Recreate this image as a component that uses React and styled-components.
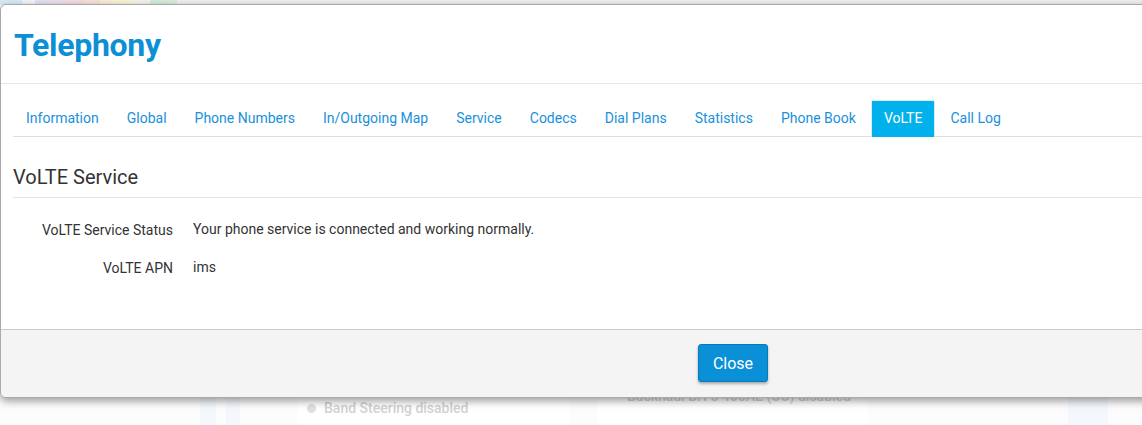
import React from "react";
import styled, { createGlobalStyle } from "styled-components";

const GlobalStyle = createGlobalStyle`
  html, body { margin: 0; padding: 0; }
  body {
    font-family: Roboto, "Liberation Sans", Arial, sans-serif;
    background: #fcfcfc;
    overflow: hidden;
  }
  * { box-sizing: border-box; }
`;

const Page = styled.div`
  position: relative;
  width: 1142px;
  height: 425px;
  overflow: hidden;
  background: #fcfcfc;
`;

/* ---------- faded page behind the dialog ---------- */
const Backdrop = styled.div`
  display: flex;
  flex-direction: column;
  height: 100%;
`;

const Stripe = styled.div`
  display: flex;
  height: 5px;
  background: #f1f1f1;
`;

const Swatch = styled.div`
  width: ${(p) => p.w}px;
  background: ${(p) => p.c};
`;

const Spacer = styled.div`
  flex: 1;
`;

const BackRow = styled.div`
  display: flex;
  height: 34px;
  padding-left: 200px;
`;

const Tile = styled.div`
  width: ${(p) => p.w}px;
  margin-left: ${(p) => p.ml || 0}px;
  background: ${(p) => p.c || "transparent"};
  display: flex;
  align-items: ${(p) => (p.top ? "flex-start" : "center")};
  padding-left: ${(p) => p.pl || 0}px;
  gap: 8px;
  color: #d2d2d2;
  font-size: 14px;
  line-height: 16px;
  font-weight: 500;
  white-space: nowrap;
`;

const Peek = styled.span`
  margin-top: -3px;
`;

const Dot = styled.span`
  width: 9px;
  height: 9px;
  border-radius: 50%;
  background: #e0e0e0;
  flex: none;
`;

/* ---------- dialog ---------- */
const Modal = styled.div`
  position: absolute;
  top: 4px;
  left: 0;
  width: 1466px;
  height: 394px;
  display: flex;
  flex-direction: column;
  background: #fff;
  border: 1px solid #a9a9a9;
  border-radius: 6px;
  box-shadow: 0 3px 9px rgba(0, 0, 0, 0.4);
  overflow: hidden;
`;

const Header = styled.div`
  padding: 22px 13px 20px;
  border-bottom: 1px solid #e6e6e6;
`;

const Title = styled.h1`
  margin: 0;
  font-size: 32px;
  line-height: 36px;
  font-weight: 700;
  color: #0d8fd6;
  letter-spacing: -0.3px;
`;

const TabBar = styled.div`
  padding: 16px 12px 0;
`;

const TabList = styled.ul`
  display: flex;
  margin: 0;
  padding: 0;
  list-style: none;
  border-bottom: 1px solid #dedede;
`;

const Tab = styled.li`
  margin: 0 2px -1px 0;
  padding: 7px 12px 9px;
  font-size: 14px;
  line-height: 20px;
  border: 1px solid ${(p) => (p.active ? "#d6eef9" : "transparent")};
  border-bottom: none;
  border-radius: 2px 2px 0 0;
  background: ${(p) => (p.active ? "#00b1eb" : "transparent")};
  color: ${(p) => (p.active ? "#fff" : "#1a91da")};
  height: 37px;
  white-space: nowrap;
`;

const Body = styled.div`
  flex: 1;
  padding: 0 0 0 12px;
`;

const SectionTitle = styled.h2`
  margin: 28px 0 0;
  padding-bottom: 8px;
  font-size: 20px;
  line-height: 24px;
  font-weight: 400;
  color: #333;
  border-bottom: 1px solid #e5e5e5;
`;

const Fields = styled.div`
  padding-top: 12px;
`;

const Row = styled.div`
  display: grid;
  grid-template-columns: 160px 1fr;
  column-gap: 20px;
  padding: 9px 0;
  font-size: 14px;
  line-height: 20px;
  color: #333;
`;

const Label = styled.div`
  text-align: right;
  position: relative;
  top: 1px;
`;

const Value = styled.div``;

const Footer = styled.div`
  height: 68px;
  flex: none;
  background: #f4f4f4;
  border-top: 1px solid #c9c9c9;
  display: flex;
  justify-content: center;
  align-items: flex-start;
  padding-top: 14px;
`;

const Button = styled.button`
  height: 38px;
  padding: 0 14px;
  font-family: Roboto, "Liberation Sans", Arial, sans-serif;
  font-size: 16px;
  color: #fff;
  background: #0a90d7;
  border: 1px solid #0579bc;
  border-radius: 3px;
  box-shadow: 0 2px 3px rgba(0, 0, 0, 0.3);
  cursor: pointer;
`;

const tabs = [
  "Information",
  "Global",
  "Phone Numbers",
  "In/Outgoing Map",
  "Service",
  "Codecs",
  "Dial Plans",
  "Statistics",
  "Phone Book",
  "VoLTE",
  "Call Log",
];

const swatches = [
  [22, "#d7ebf7"],
  [13, "#f3f6f8"],
  [13, "#e6e0f1"],
  [12, "#ece0ef"],
  [12, "#f3dde8"],
  [13, "#f6dde0"],
  [15, "#f9e2da"],
  [13, "#faefd6"],
  [12, "#fbf5d2"],
  [15, "#f8f6e2"],
  [10, "#f3f3f3"],
  [15, "#d6eddb"],
  [12, "#d9eedd"],
];

export default function App() {
  return (
    <>
      <GlobalStyle />
      <Page>
        <Backdrop>
          <Stripe>
            {swatches.map(([w, c], i) => (
              <Swatch key={i} w={w} c={c} />
            ))}
          </Stripe>
          <Spacer />
          <BackRow>
            <Tile w={16} c="#f4f8fc" />
            <Tile w={14} ml={10} c="#f4f8fc" />
            <Tile w={273} ml={57} c="#ffffff" pl={10}>
              <Dot />
              Band Steering disabled
            </Tile>
            <Tile w={271} ml={27} c="#ffffff" pl={30} top>
              <Peek>Backhaul BH 5 400AE (UU) disabled</Peek>
            </Tile>
            <Tile w={40} ml={200} c="#f4f8fc" />
          </BackRow>
        </Backdrop>

        <Modal>
          <Header>
            <Title>Telephony</Title>
          </Header>
          <TabBar>
            <TabList>
              {tabs.map((t) => (
                <Tab key={t} active={t === "VoLTE"}>
                  {t}
                </Tab>
              ))}
            </TabList>
          </TabBar>
          <Body>
            <SectionTitle>VoLTE Service</SectionTitle>
            <Fields>
              <Row>
                <Label>VoLTE Service Status</Label>
                <Value>Your phone service is connected and working normally.</Value>
              </Row>
              <Row>
                <Label>VoLTE APN</Label>
                <Value>ims</Value>
              </Row>
            </Fields>
          </Body>
          <Footer>
            <Button>Close</Button>
          </Footer>
        </Modal>
      </Page>
    </>
  );
}
